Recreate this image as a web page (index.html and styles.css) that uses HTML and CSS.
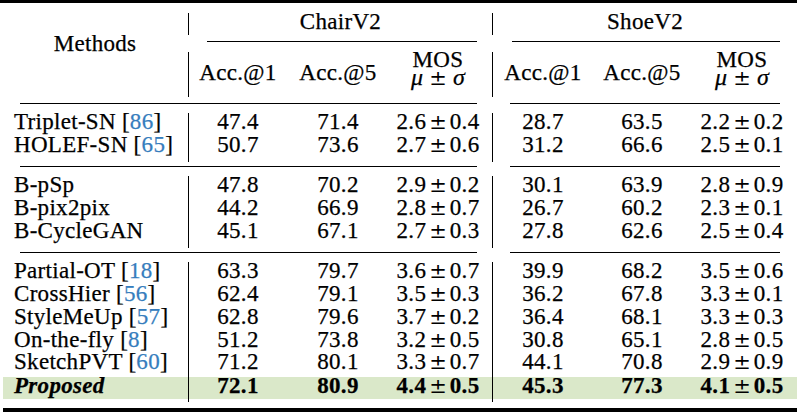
FILE: index.html
```html
<!DOCTYPE html>
<html>
<head>
<meta charset="utf-8">
<title>Results</title>
<link rel="stylesheet" href="styles.css">
</head>
<body>
<div class="table">
  <div class="toprule"></div>
  <div class="grid head">
    <div class="methods">Methods</div>
    <div class="vbar b1 hr1"></div>
    <div class="gtitle chair">ChairV2</div>
    <div class="vbar b2 hr1"></div>
    <div class="gtitle shoe">ShoeV2</div>
    <div class="cmid chair"></div>
    <div class="cmid shoe"></div>
    <div class="vbar b1 hr3"></div>
    <div class="vbar b2 hr3"></div>
    <div class="sub c3">Acc.@1</div>
    <div class="sub c4">Acc.@5</div>
    <div class="mos c5"><div class="mline">MOS</div><div class="mline"><i class="gk">μ</i><span class="pm hpm">±</span><i class="gk">σ</i></div></div>
    <div class="sub c7">Acc.@1</div>
    <div class="sub c8">Acc.@5</div>
    <div class="mos c9"><div class="mline">MOS</div><div class="mline"><i class="gk">μ</i><span class="pm hpm">±</span><i class="gk">σ</i></div></div>
  </div>
  <div class="rule"><span class="seg l"></span><span class="seg r"></span></div>

  <div class="grid grp n2">
    <div class="vbar b1"></div><div class="vbar b2"></div>
    <div class="name">Triplet-SN [<span class="cite">86</span>]</div><div class="num">47.4</div><div class="num">71.4</div><div class="num m">2.6<span class="pm">±</span>0.4</div><div class="num">28.7</div><div class="num">63.5</div><div class="num m2">2.2<span class="pm">±</span>0.2</div>
    <div class="name">HOLEF-SN [<span class="cite">65</span>]</div><div class="num">50.7</div><div class="num">73.6</div><div class="num m">2.7<span class="pm">±</span>0.6</div><div class="num">31.2</div><div class="num">66.6</div><div class="num m2">2.5<span class="pm">±</span>0.1</div>
  </div>
  <div class="rule"><span class="seg l"></span><span class="seg r"></span></div>

  <div class="grid grp n3">
    <div class="vbar b1"></div><div class="vbar b2"></div>
    <div class="name">B-pSp</div><div class="num">47.8</div><div class="num">70.2</div><div class="num m">2.9<span class="pm">±</span>0.2</div><div class="num">30.1</div><div class="num">63.9</div><div class="num m2">2.8<span class="pm">±</span>0.9</div>
    <div class="name">B-pix2pix</div><div class="num">44.2</div><div class="num">66.9</div><div class="num m">2.8<span class="pm">±</span>0.7</div><div class="num">26.7</div><div class="num">60.2</div><div class="num m2">2.3<span class="pm">±</span>0.1</div>
    <div class="name">B-CycleGAN</div><div class="num">45.1</div><div class="num">67.1</div><div class="num m">2.7<span class="pm">±</span>0.3</div><div class="num">27.8</div><div class="num">62.6</div><div class="num m2">2.5<span class="pm">±</span>0.4</div>
  </div>
  <div class="rule"><span class="seg l"></span><span class="seg r"></span></div>

  <div class="grid grp n6 last">
    <div class="vbar b1"></div><div class="vbar b2"></div>
    <div class="name">Partial-OT [<span class="cite">18</span>]</div><div class="num">63.3</div><div class="num">79.7</div><div class="num m">3.6<span class="pm">±</span>0.7</div><div class="num">39.9</div><div class="num">68.2</div><div class="num m2">3.5<span class="pm">±</span>0.6</div>
    <div class="name">CrossHier [<span class="cite">56</span>]</div><div class="num">62.4</div><div class="num">79.1</div><div class="num m">3.5<span class="pm">±</span>0.3</div><div class="num">36.2</div><div class="num">67.8</div><div class="num m2">3.3<span class="pm">±</span>0.1</div>
    <div class="name">StyleMeUp [<span class="cite">57</span>]</div><div class="num">62.8</div><div class="num">79.6</div><div class="num m">3.7<span class="pm">±</span>0.2</div><div class="num">36.4</div><div class="num">68.1</div><div class="num m2">3.3<span class="pm">±</span>0.3</div>
    <div class="name">On-the-fly [<span class="cite">8</span>]</div><div class="num">51.2</div><div class="num">73.8</div><div class="num m">3.2<span class="pm">±</span>0.5</div><div class="num">30.8</div><div class="num">65.1</div><div class="num m2">2.8<span class="pm">±</span>0.5</div>
    <div class="name">SketchPVT [<span class="cite">60</span>]</div><div class="num">71.2</div><div class="num">80.1</div><div class="num m">3.3<span class="pm">±</span>0.7</div><div class="num">44.1</div><div class="num">70.8</div><div class="num m2">2.9<span class="pm">±</span>0.9</div>
    <div class="name hl first"><i>Proposed</i></div><div class="num hl">72.1</div><div class="num hl">80.9</div><div class="num m hl">4.4<span class="pm">±</span>0.5</div><div class="num hl">45.3</div><div class="num hl">77.3</div><div class="num m2 hl">4.1<span class="pm">±</span>0.5</div>
  </div>
  <div class="botrule"></div>
</div>
</body>
</html>
```

FILE: styles.css
```css
* { box-sizing: border-box; margin: 0; padding: 0; }
html, body { background: #fff; }
body {
  margin: 0;
  font-family: "Liberation Serif", "Times New Roman", serif;
  font-size: 23px;
  letter-spacing: 0.3px;
  color: #000;
  -webkit-text-stroke-width: 0.25px;
}
.table { width: 797px; padding-left: 2px; }
.toprule { height: 3px; background: #000; margin-left: -2px; }
.botrule { height: 4px; background: #000; margin-left: 1px; }

.grid {
  display: grid;
  grid-template-columns: 186px 1px 98px 102px 103px 1px 100px 98px 106px;
}
.head { grid-template-rows: 38px 1px 61px; }
.grp { padding: 7px 0 10px; }
.n2 { grid-template-rows: repeat(2, 22.7px); }
.n3 { grid-template-rows: repeat(3, 22.7px); }
.n6 { grid-template-rows: repeat(6, 22.7px); }
.grp.last { padding-bottom: 11px; }

.vbar { background: #000; grid-row: 1 / -1; margin: 2px 0 -5.7px; }
.b1 { grid-column: 2; }
.b2 { grid-column: 6; }
.head .vbar { margin: 10px 0 6px; }
.head .hr1 { grid-row: 1; }
.head .hr3 { grid-row: 3; }

.methods {
  grid-column: 1;
  grid-row: 1 / 4;
  text-align: center;
  line-height: 22.7px;
  padding-top: 30px;
}
.gtitle { grid-row: 1; align-self: center; text-align: center; line-height: 22.7px; }
.gtitle.chair { grid-column: 3 / 6; }
.gtitle.shoe { grid-column: 7 / 10; }
.cmid { grid-row: 2; background: #000; }
.cmid.chair { grid-column: 3 / 6; margin: 0 15px 0 18px; }
.cmid.shoe { grid-column: 7 / 10; margin: 0 17px 0 19px; }
.sub, .mos { grid-row: 3; text-align: center; }
.sub { line-height: 22.7px; padding-top: 20px; }
.mos { padding-top: 9px; display: flex; flex-direction: column; }
.mline { height: 17.5px; line-height: 17.5px; }
.c3 { grid-column: 3; }
.c4 { grid-column: 4; }
.c5 { grid-column: 5; padding-right: 5px; }
.c7 { grid-column: 7; }
.c8 { grid-column: 8; }
.c9 { grid-column: 9; padding-right: 4px; }
.gk { font-size: 24px; }

.rule { display: flex; height: 1px; }
.rule .seg { display: block; background: #000; height: 1px; }
.rule .l { margin-left: 18px; width: 457px; }
.rule .r { margin-left: 33px; width: 270px; }

.name { padding-left: 12px; white-space: nowrap; line-height: 22.7px; }
.num { text-align: center; white-space: nowrap; line-height: 22.7px; }
.num.m { padding-right: 5px; }
.num.m2 { padding-right: 4px; }
.cite { color: #367dbd; }
.pm {
  font-family: "DejaVu Serif", serif;
  font-size: 21px;
  letter-spacing: 0;
  margin: 0 3px;
  font-weight: normal;
  -webkit-text-stroke-width: 0;
}
.hpm { margin: 0 6px; }

.hl {
  background: #dae8c9;
  margin-top: 3px;
  margin-bottom: -2.3px;
  line-height: 17.5px;
  font-weight: bold;
}
.hl.first { margin-left: 1px; padding-left: 11px; }
```
